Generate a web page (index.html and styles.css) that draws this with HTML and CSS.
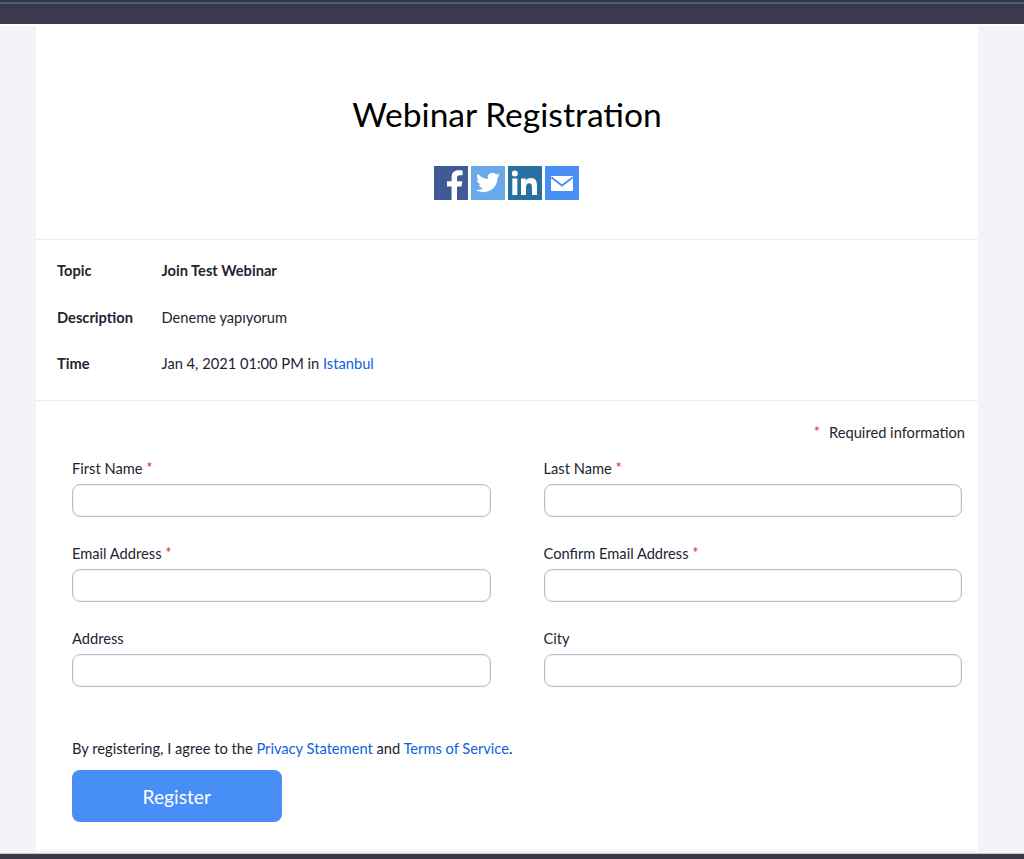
FILE: index.html
```html
<!DOCTYPE html>
<html lang="en">
<head>
<meta charset="utf-8">
<title>Webinar Registration</title>
<link rel="stylesheet" href="styles.css">
</head>
<body>
<div class="topbar"><div class="topbar-line"></div><div class="topbar-strip"></div></div>
<div class="stage">
  <main class="card">
    <header class="hero">
      <h1 class="title">Webinar Registration</h1>
      <div class="share">
        <svg class="share-icon" viewBox="0 0 34 34"><rect width="34" height="34" fill="#3f5a96"/><path d="M23 34V20.500h4.600l.7-5.300H23v-3.400c0-1.600.5-2.600 2.700-2.600h2.900V4.400c-.5-.1-2.200-.2-4.100-.2-4.100 0-6.900 2.500-6.900 7.100v3.900h-4.600v5.300h4.600V34z" fill="#fff"/></svg>
        <svg class="share-icon" viewBox="0 0 34 34"><rect width="34" height="34" fill="#6aaae8"/><path d="M29 9.100c-.9.4-1.800.7-2.800.8 1-.6 1.800-1.600 2.200-2.700-.9.6-2 1-3.100 1.200a4.900 4.900 0 0 0-8.400 4.500C12.800 12.700 9.200 10.700 6.700 7.700c-1.300 2.200-.7 5.100 1.500 6.500-.8 0-1.600-.2-2.200-.6 0 2.400 1.700 4.400 3.900 4.900-.7.2-1.500.2-2.200.1.600 2 2.400 3.400 4.600 3.400A9.900 9.900 0 0 1 5 24c2.200 1.400 4.800 2.200 7.500 2.200 9.100 0 14.300-7.700 14-14.600 1-.7 1.800-1.500 2.500-2.500z" fill="#fff"/></svg>
        <svg class="share-icon" viewBox="0 0 34 34"><rect width="34" height="34" fill="#28709f"/><circle cx="6.800" cy="7.500" r="3" fill="#fff"/><path d="M4.300 12.500h5V29h-5zM13 12.500h4.800v2.300c.8-1.400 2.500-2.700 5-2.700 5 0 6.200 3.400 6.200 7.800V29h-5v-7.800c0-2-.4-4-2.700-4s-3.300 1.800-3.300 4V29h-5z" fill="#fff"/></svg>
        <svg class="share-icon" viewBox="0 0 34 34"><rect width="34" height="34" fill="#478ef7"/><rect x="6" y="10" width="22" height="15" rx="1" fill="#fff"/><path d="M6.500 11.500 17 19.500l10.500-8" fill="none" stroke="#478ef7" stroke-width="1.800"/></svg>
      </div>
    </header>
    <section class="details">
      <div class="detail-row">
        <div class="detail-label">Topic</div>
        <div class="detail-value strong">Join Test Webinar</div>
      </div>
      <div class="detail-row">
        <div class="detail-label">Description</div>
        <div class="detail-value">Deneme yapıyorum</div>
      </div>
      <div class="detail-row">
        <div class="detail-label">Time</div>
        <div class="detail-value">Jan 4, 2021 01:00 PM in <a class="link" href="#">Istanbul</a></div>
      </div>
    </section>
    <form class="form">
      <div class="required-note"><span class="req req-note">*</span>Required information</div>
      <div class="fields">
        <label class="field"><span class="field-label">First Name <span class="req">*</span></span><input class="input" type="text"></label>
        <label class="field"><span class="field-label">Last Name <span class="req">*</span></span><input class="input" type="text"></label>
        <label class="field"><span class="field-label">Email Address <span class="req">*</span></span><input class="input" type="text"></label>
        <label class="field"><span class="field-label">Confirm Email Address <span class="req">*</span></span><input class="input" type="text"></label>
        <label class="field"><span class="field-label">Address</span><input class="input" type="text"></label>
        <label class="field"><span class="field-label">City</span><input class="input" type="text"></label>
      </div>
      <p class="terms">By registering, I agree to the <a class="link" href="#">Privacy Statement</a> and <a class="link" href="#">Terms of Service</a>.</p>
      <button class="register" type="button">Register</button>
    </form>
  </main>
</div>
<div class="bottombar"></div>
</body>
</html>
```
FILE: styles.css
```css
* { box-sizing: border-box; }
html, body { margin: 0; height: 859px; overflow: hidden; }
body {
  display: flex;
  flex-direction: column;
  background: #fff;
  font-family: Lato, "Liberation Sans", sans-serif;
  font-size: 14.670px;
  color: #232333;
  text-rendering: optimizeLegibility;
}
.topbar { height: 24px; flex: none; background: #3d3a4f; }
.topbar-line { height: 4px; background: linear-gradient(#37373c 0 50%, #36648c 50% 100%); }
.topbar-strip { height: 4px; background: #38383c; }
.stage { flex: 1; min-height: 0; background: #f3f4f8; border-top: 2px solid #fff; padding-left: 36px; }
.card { width: 942px; height: 100%; margin-top: -2px; background: #fff; }
.hero { height: 216px; padding-top: 67px; border-bottom: 1px solid #ededf2; display: flex; flex-direction: column; align-items: center; }
.title { margin: 0; font-size: 33.600px; line-height: 46px; font-weight: 400; color: #000; }
.share { display: flex; gap: 3px; margin: 29px 1px 0 0; }
.share-icon { width: 34px; height: 34px; display: block; }
.details { height: 161px; padding: 7.600px 21px 0; border-bottom: 1px solid #ededf2; }
.detail-row { display: flex; height: 46.400px; align-items: center; }
.detail-label { width: 104.500px; font-weight: 700; }
.strong { font-weight: 700; }
.link { color: #0e62e0; text-decoration: none; }
.form { padding: 22px 13px 0 36px; }
.required-note { text-align: right; line-height: 20px; }
.req { color: #e02828; font-size: 15px; line-height: 0; position: relative; top: -1px; }
.req-note { margin-right: 9px; }
.fields { display: grid; grid-template-columns: 419px 418.500px; column-gap: 52.500px; row-gap: 27px; margin-top: 16px; }
.field { display: flex; flex-direction: column; }
.field-label { line-height: 20px; height: 20px; margin-bottom: 5px; }
.input { height: 33px; border: 1px solid #bdbccc; border-radius: 8px; background: #fff; outline: none; box-shadow: inset 0 0 0 1px #efeff4; }
.terms { margin: 52px 0 0; line-height: 20px; }
.register { display: block; margin-top: 11px; width: 209.500px; height: 52px; border: 0; border-radius: 8px; background: #478ef7; color: #fff; font-family: inherit; font-size: 19.200px; }
.bottombar { height: 6px; flex: none; background: #3a384a; border-top: 1px solid #c9c9d0; }
```
